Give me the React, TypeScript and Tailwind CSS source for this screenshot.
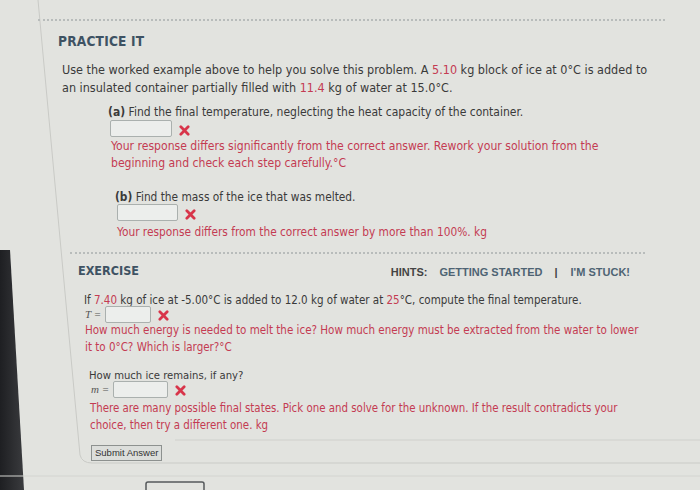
import { ReactNode } from 'react';

const red = 'text-[#c43b52]';

function Num({ children }: { children: ReactNode }) {
  return <span className={red}>{children}</span>;
}

function Cross({ className = '' }: { className?: string }) {
  return (
    <svg viewBox="0 0 12 12" className={`h-[11px] w-[11px] ${className}`}>
      <path d="M2 2 L10 10 M10 2 L2 10" stroke="#d8354a" strokeWidth="3" strokeLinecap="round" />
    </svg>
  );
}

function AnswerBox({ width, label }: { width: string; label?: string }) {
  return (
    <div className="flex items-center">
      {label ? <span className="mr-[4px] font-['Liberation_Serif',serif] text-[11px] italic text-[#555]">{label}</span> : null}
      <div className={`h-[17px] ${width} rounded-[2px] border border-[#aab0ae] bg-[#eceeec]`} />
      <Cross className="ml-[7px] mt-[3px]" />
    </div>
  );
}

export default function App() {
  return (
    <div className="relative h-[490px] w-[700px] overflow-hidden bg-[#e2e3df] font-['DejaVu_Sans_Condensed','DejaVu_Sans',sans-serif] text-[#3a3a3a]">
      {/* photo edges */}
      <svg className="pointer-events-none absolute inset-0" width="700" height="490">
        <defs>
          <linearGradient id="bezel" x1="0" y1="0" x2="1" y2="0">
            <stop offset="0" stopColor="#1e1f22" />
            <stop offset="1" stopColor="#3a3b3e" />
          </linearGradient>
        </defs>
        <path d="M0 250 L10 250 L24 490 L0 490 Z" fill="url(#bezel)" />
        <path d="M38 0 L80 455" stroke="#c9cac6" strokeWidth="1" />
        <path d="M80 455 Q82 463 92 463 L700 463" stroke="#cacbc7" strokeWidth="1" fill="none" />
        <path d="M175 440 L700 440" stroke="#cfd0cc" strokeWidth="1" />
        <path d="M0 476 L700 476" stroke="#d3d4d0" strokeWidth="1" />
        <path d="M146 490 L146 484 Q146 482 148 482 L202 482 Q204 482 204 484 L204 490" stroke="#55595c" strokeWidth="1.5" fill="none" />
      </svg>

      <div className="relative pt-[19px]">
        <div className="ml-[38px] w-[627px] border-t-2 border-dotted border-[#b8bcbb]" />

        <div className="ml-[58px] mt-[10px] text-[13.6px] font-bold tracking-[0.2px] text-[#3e5263]">PRACTICE IT</div>

        <p className="ml-[62px] mt-[10px] w-[592px] text-[12.5px] leading-[18px]">
          Use the worked example above to help you solve this problem. A <Num>5.10</Num> kg block of ice at 0°C is added to an insulated container partially filled with <Num>11.4</Num> kg of water at 15.0°C.
        </p>

        <div className="ml-[108px] mt-[7px] text-[12px] leading-[16px]">
          <span className="font-bold">(a)</span> Find the final temperature, neglecting the heat capacity of the container.
        </div>
        <div className="ml-[110px] mt-[0px]">
          <AnswerBox width="w-[62px]" />
        </div>
        <p className={`ml-[111px] mt-[1px] w-[498px] text-[12.1px] leading-[17px] ${red}`}>
          Your response differs significantly from the correct answer. Rework your solution from the beginning and check each step carefully.°C
        </p>

        <div className="ml-[115px] mt-[17px] text-[11.8px] leading-[16px]">
          <span className="font-bold">(b)</span> Find the mass of the ice that was melted.
        </div>
        <div className="ml-[117px] mt-[-1px]">
          <AnswerBox width="w-[61px]" />
        </div>
        <p className={`ml-[117px] mt-[3px] text-[11.8px] leading-[17px] ${red}`}>
          Your response differs from the correct answer by more than 100%. kg
        </p>

        <div className="ml-[70px] mt-[11px] w-[575px] border-t-2 border-dotted border-[#b8bcbb]" />

        <div className="ml-[78px] mt-[7px] flex w-[552px] items-center justify-between">
          <div className="text-[12.5px] font-bold text-[#3e5263]">EXERCISE</div>
          <div className="mt-[3px] flex items-center font-['Liberation_Sans',sans-serif] text-[11px] font-bold">
            <span className="text-[#444]">HINTS:</span>
            <span className="ml-[12px] text-[#4e6373]">GETTING STARTED</span>
            <span className="ml-[12px] text-[#444]">|</span>
            <span className="ml-[13px] text-[#4e6373]">I'M STUCK!</span>
          </div>
        </div>

        <div className="ml-[84px] mt-[12px] text-[11.5px] leading-[15px]">
          If <Num>7.40</Num> kg of ice at -5.00°C is added to 12.0 kg of water at <Num>25</Num>°C, compute the final temperature.
        </div>
        <div className="ml-[85px] mt-[-2px]">
          <AnswerBox width="w-[46px]" label="T =" />
        </div>
        <p className={`ml-[85px] mt-[-1px] w-[556px] text-[11.5px] leading-[17px] ${red}`}>
          How much energy is needed to melt the ice? How much energy must be extracted from the water to lower it to 0°C? Which is larger?°C
        </p>

        <div className="ml-[89px] mt-[12px] text-[11.2px] leading-[15px]">How much ice remains, if any?</div>
        <div className="ml-[91px] mt-[-2px]">
          <AnswerBox width="w-[55px]" label="m =" />
        </div>
        <p className={`ml-[90px] mt-[2px] w-[528px] text-[11.4px] leading-[17px] ${red}`}>
          There are many possible final states. Pick one and solve for the unknown. If the result contradicts your choice, then try a different one. kg
        </p>

        <div className="ml-[91px] mt-[5px]">
          <button
            type="button"
            className="h-[16px] border border-[#8d918f] bg-[#dcdedb] px-[3px] font-['Liberation_Sans',sans-serif] text-[9.5px] leading-[14px] text-[#333]"
          >
            Submit Answer
          </button>
        </div>
      </div>
    </div>
  );
}
